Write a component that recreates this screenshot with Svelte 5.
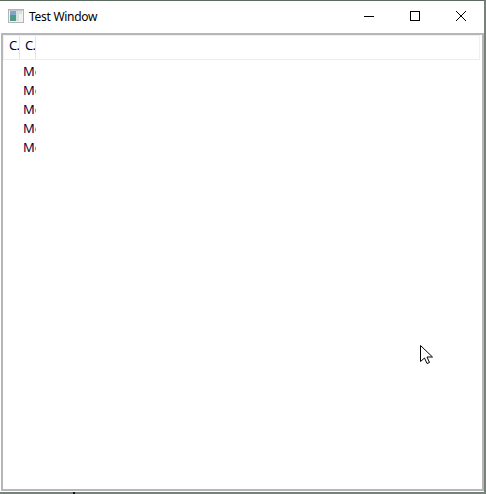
<script lang="ts">
  const columns = ["C...", "C..."];
  const rows = ["Message 1", "Message 2", "Message 3", "Message 4", "Message 5"];
</script>

<div class="window">
  <header class="titlebar">
    <svg class="app-icon" width="16" height="16" viewBox="0 0 16 16" aria-hidden="true">
      <rect x="0.5" y="1.5" width="15" height="13" fill="#f2f2f2" stroke="#b4b4b4" />
      <rect x="1" y="2" width="14" height="1" fill="#c8c8c8" />
      <rect x="2" y="3" width="6" height="10" fill="#4f9a8f" />
      <rect x="2" y="3" width="6" height="4" fill="#7fa6c8" />
      <rect x="8" y="3" width="3" height="10" fill="#d5e3e0" />
      <rect x="11" y="3" width="3" height="3" fill="#d4e0ea" />
    </svg>
    <span class="title">Test Window</span>
    <div class="controls">
      <button type="button" aria-label="Minimize">
        <svg width="10" height="10" viewBox="0 0 10 10"><path d="M0 5.5h10" stroke="#000" fill="none" /></svg>
      </button>
      <button type="button" aria-label="Maximize">
        <svg width="10" height="10" viewBox="0 0 10 10"><rect x="0.5" y="0.5" width="9" height="9" stroke="#000" fill="none" /></svg>
      </button>
      <button type="button" aria-label="Close">
        <svg width="10" height="10" viewBox="0 0 10 10"><path d="M0 0l10 10M10 0L0 10" stroke="#000" stroke-width="1" fill="none" /></svg>
      </button>
    </div>
  </header>

  <main class="list">
    <div class="list-head">
      {#each columns as col}
        <div class="head-cell">{col}</div>
      {/each}
    </div>
    <div class="list-body">
      {#each rows as row}
        <div class="row"><span class="cell">{row}</span></div>
      {/each}
    </div>
    <svg class="cursor" width="13" height="20" viewBox="0 0 13 20" aria-hidden="true">
      <path d="M0.5 0.5V16.5L4.5 13L7 18.5L9.5 17.5L7 12H12.5Z" fill="#fff" stroke="#000" stroke-width="1" />
    </svg>
  </main>
  <span class="edge-mark"></span>
</div>

<style>
  :global(body) {
    margin: 0;
    background: #fff;
  }
  .window {
    position: relative;
    box-sizing: border-box;
    width: 486px;
    height: 494px;
    display: flex;
    flex-direction: column;
    background: #fff;
    border-top: 1px solid #5c6b60;
    border-right: 2px solid #76827a;
    border-bottom: 2px solid #76827a;
    font-family: "Noto Sans", sans-serif;
    font-size: 13px;
    color: #000;
  }
  .titlebar {
    height: 32px;
    flex: none;
    display: flex;
    align-items: center;
    padding-left: 8px;
    padding-bottom: 2px;
    box-sizing: border-box;
  }
  .app-icon {
    margin-right: 5px;
  }
  .title {
    flex: 1;
    font-size: 12px;
    letter-spacing: -0.28px;
  }
  .controls {
    display: flex;
  }
  .controls button {
    width: 46px;
    height: 30px;
    padding: 0;
    border: 0;
    background: none;
    display: grid;
    place-items: center;
  }
  .list {
    position: relative;
    flex: 1;
    margin: 0 0 1px 1px;
    border: 2px solid #b6b6ba;
    background: #fff;
    overflow: hidden;
  }
  .list-head {
    display: flex;
    height: 23px;
    margin-right: 2px;
    border: 1px solid #f0f0f0;
    border-bottom-color: #ececec;
  }
  .head-cell {
    box-sizing: border-box;
    width: 16px;
    overflow: hidden;
    white-space: nowrap;
    padding-left: 5px;
    line-height: 19px;
    letter-spacing: -0.7px;
    border-right: 1px solid #e5e5e5;
    color: #000032;
  }
  .list-body {
    padding-top: 2px;
  }
  .row {
    height: 19px;
    line-height: 19px;
    padding-left: 20px;
  }
  .cell {
    display: block;
    width: 13px;
    overflow: hidden;
    white-space: nowrap;
    color: #200030;
  }
  .cursor {
    position: absolute;
    left: 417px;
    top: 310px;
  }
  .edge-mark {
    position: absolute;
    left: 73px;
    bottom: -2px;
    width: 2px;
    height: 2px;
    background: #111;
  }
</style>
